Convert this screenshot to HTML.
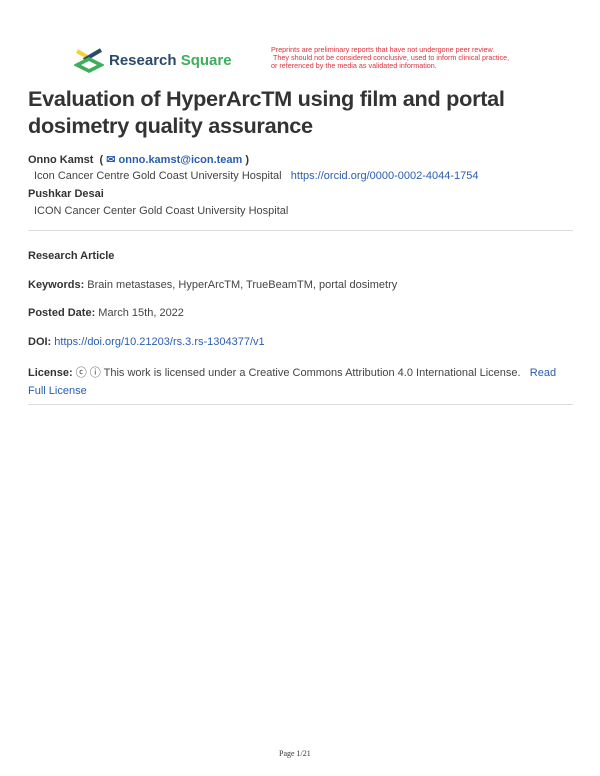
<!DOCTYPE html>
<html><head><meta charset="utf-8"><style>
body{margin:0;width:600px;height:776px;background:#fff;font-family:"Liberation Sans",sans-serif;position:relative;overflow:hidden}
.a{position:absolute;white-space:nowrap}
.b{font-weight:bold;color:#333}
.t{color:#444;font-size:11px}
.l{color:#2a5db0}
</style></head><body>
<svg class="a" style="left:74px;top:47px" width="30" height="26" viewBox="0 0 30 26">
<path d="M3 4 L15 11" stroke="#f2d23a" stroke-width="4" fill="none"/>
<path d="M27 3 L10 13" stroke="#2b4a6b" stroke-width="4" fill="none"/>
<path d="M15 12 L27 18 L15 24 L3 18 Z" stroke="#3fae5b" stroke-width="3.5" fill="none" stroke-linejoin="miter"/>
</svg>
<div class="a" style="left:109px;top:52px;font-size:15px;font-weight:bold;color:#2b4a6b">Research <span style="color:#3fae5b">Square</span></div>
<div class="a" style="left:271px;top:46px;font-size:7.2px;line-height:8px;color:#e0303a">Preprints are preliminary reports that have not undergone peer review.<br>&nbsp;They should not be considered conclusive, used to inform clinical practice,<br>or referenced by the media as validated information.</div>
<div class="a" style="left:28px;top:85px;font-size:21.7px;font-weight:bold;line-height:27px;color:#333;letter-spacing:-0.3px">Evaluation of HyperArcTM using film and portal<br>dosimetry quality assurance</div>
<div class="a b" style="left:28px;top:153px;font-size:11px">Onno Kamst &nbsp;( <span class="l">✉ onno.kamst@icon.team</span> )</div>
<div class="a t" style="left:34px;top:170px">Icon Cancer Centre Gold Coast University Hospital &nbsp;&nbsp;<span class="l">https://orcid.org/0000-0002-4044-1754</span></div>
<div class="a b" style="left:28px;top:188px;font-size:11px">Pushkar Desai</div>
<div class="a t" style="left:34px;top:205px">ICON Cancer Center Gold Coast University Hospital</div>
<div class="a" style="left:28px;top:230px;width:545px;border-top:1px solid #ddd"></div>
<div class="a b" style="left:28px;top:250px;font-size:11px">Research Article</div>
<div class="a t" style="left:28px;top:279px"><b style="color:#333">Keywords:</b> Brain metastases, HyperArcTM, TrueBeamTM, portal dosimetry</div>
<div class="a t" style="left:28px;top:307px"><b style="color:#333">Posted Date:</b> March 15th, 2022</div>
<div class="a t" style="left:28px;top:336px"><b style="color:#333">DOI:</b> <span class="l">https://doi.org/10.21203/rs.3.rs-1304377/v1</span></div>
<div class="a t" style="left:28px;top:364px;line-height:18px"><b style="color:#333">License:</b> ⓒ ⓘ This work is licensed under a Creative Commons Attribution 4.0 International License. &nbsp;&nbsp;<span class="l">Read<br>Full License</span></div>
<div class="a" style="left:28px;top:404px;width:545px;border-top:1px solid #ddd"></div>
<div class="a" style="left:279px;top:749px;font-size:8px;font-family:'Liberation Serif',serif;color:#333">Page 1/21</div>
</body></html>
